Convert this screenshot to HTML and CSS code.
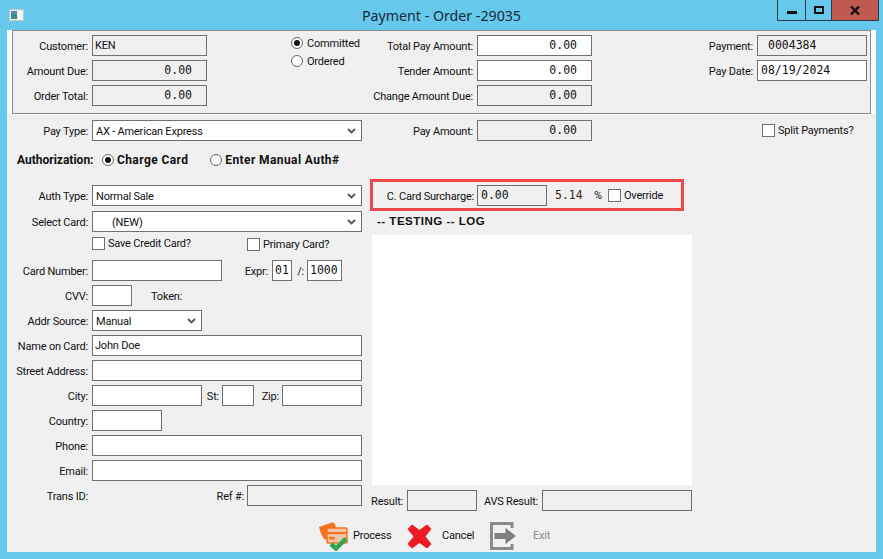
FILE: index.html
```html
<!DOCTYPE html>
<html lang="en">
<head>
<meta charset="utf-8">
<title>Payment - Order -29035</title>
<link rel="stylesheet" href="styles.css">
</head>
<body>
<div class="window">
  <header class="titlebar">
    <svg class="app-icon" width="15" height="12" viewBox="0 0 15 12"><rect x="0.5" y="0.5" width="14" height="11" fill="#e8eef0" stroke="#c4ccd0"/><rect x="2" y="2" width="6" height="8" fill="#3c8f86"/><rect x="2" y="2" width="6" height="3" fill="#5a8fb0"/><rect x="9" y="2" width="4" height="8" fill="#f8fafa"/></svg>
    <h1 class="title">Payment - Order -29035</h1>
    <div class="controls">
      <div class="ctl ctl-min"><span class="glyph-min"></span></div>
      <div class="ctl ctl-max"><span class="glyph-max"></span></div>
      <div class="ctl ctl-close"><svg width="10" height="9" viewBox="0 0 10 9"><path d="M1 0.5L9 8.5M9 0.5L1 8.5" stroke="#111" stroke-width="2.4" fill="none"/></svg></div>
    </div>
  </header>
  <main class="client">
    <div class="band">
    <section class="group">
      <div class="col col-a">
        <div class="row"><label class="lbl w77">Customer:</label><div class="fld ro w115">KEN</div></div>
        <div class="row"><label class="lbl w77">Amount Due:</label><div class="fld ro w115 num">0.00</div></div>
        <div class="row"><label class="lbl w77">Order Total:</label><div class="fld ro w115 num">0.00</div></div>
      </div>
      <div class="col col-b">
        <div class="opt"><span class="radio on"></span>Committed</div>
        <div class="opt"><span class="radio"></span>Ordered</div>
      </div>
      <div class="col col-c">
        <div class="row"><label class="lbl w104">Total Pay Amount:</label><div class="fld w115 num">0.00</div></div>
        <div class="row"><label class="lbl w104">Tender Amount:</label><div class="fld w115 num">0.00</div></div>
        <div class="row"><label class="lbl w104">Change Amount Due:</label><div class="fld ro w115 num">0.00</div></div>
      </div>
      <div class="col col-d">
        <div class="row"><label class="lbl w52">Payment:</label><div class="fld ro w110 mono pay-no">0004384</div></div>
        <div class="row"><label class="lbl w52">Pay Date:</label><div class="fld w110 mono">08/19/2024</div></div>
      </div>
    </section>
    </div>

    <section class="pay-row">
      <label class="lbl w80">Pay Type:</label>
      <div class="fld sel w270"><span>AX - American Express</span><svg class="chev" width="9" height="6" viewBox="0 0 9 6"><path d="M1 1L4.500 4.500L8 1" fill="none" stroke="#555" stroke-width="1.800"/></svg></div>
      <label class="lbl w112">Pay Amount:</label>
      <div class="fld ro w115 num">0.00</div>
      <div class="opt split"><span class="check"></span>Split Payments?</div>
    </section>

    <section class="auth-row">
      <strong class="auth-lbl">Authorization:</strong>
      <span class="radio on"></span><strong class="auth-opt">Charge Card</strong>
      <span class="radio r2"></span><strong class="auth-opt">Enter Manual Auth#</strong>
    </section>

    <section class="columns">
      <div class="left">
        <div class="row"><label class="lbl w80">Auth Type:</label><div class="fld sel w270"><span>Normal Sale</span><svg class="chev" width="9" height="6" viewBox="0 0 9 6"><path d="M1 1L4.500 4.500L8 1" fill="none" stroke="#555" stroke-width="1.800"/></svg></div></div>
        <div class="row row-card"><label class="lbl w80">Select Card:</label><div class="fld sel w270"><span class="indent">(NEW)</span><svg class="chev" width="9" height="6" viewBox="0 0 9 6"><path d="M1 1L4.500 4.500L8 1" fill="none" stroke="#555" stroke-width="1.800"/></svg></div></div>
        <div class="checks">
          <div class="opt save"><span class="check"></span>Save Credit Card?</div>
          <div class="opt primary"><span class="check"></span>Primary Card?</div>
        </div>
        <div class="row"><label class="lbl w80">Card Number:</label><div class="fld w130"></div><label class="lbl expr">Expr:</label><div class="fld w20 mono">01</div><label class="lbl slash">/:</label><div class="fld w35 mono">1000</div></div>
        <div class="row"><label class="lbl w80">CVV:</label><div class="fld w40"></div><label class="lbl token">Token:</label></div>
        <div class="row"><label class="lbl w80">Addr Source:</label><div class="fld sel w110"><span>Manual</span><svg class="chev" width="9" height="6" viewBox="0 0 9 6"><path d="M1 1L4.500 4.500L8 1" fill="none" stroke="#555" stroke-width="1.800"/></svg></div></div>
        <div class="row"><label class="lbl w80">Name on Card:</label><div class="fld w270">John Doe</div></div>
        <div class="row"><label class="lbl w80">Street Address:</label><div class="fld w270"></div></div>
        <div class="row"><label class="lbl w80">City:</label><div class="fld w110"></div><label class="lbl st">St:</label><div class="fld w32"></div><label class="lbl zip">Zip:</label><div class="fld f80"></div></div>
        <div class="row"><label class="lbl w80">Country:</label><div class="fld w70"></div></div>
        <div class="row"><label class="lbl w80">Phone:</label><div class="fld w270"></div></div>
        <div class="row"><label class="lbl w80">Email:</label><div class="fld w270"></div></div>
        <div class="row"><label class="lbl w80">Trans ID:</label><label class="lbl ref">Ref #:</label><div class="fld ro w115"></div></div>
      </div>
      <div class="right">
        <div class="surcharge">
          <label class="lbl sur-lbl">C. Card Surcharge:</label>
          <div class="fld ro w70 mono">0.00</div>
          <span class="mono rate">5.14</span>
          <span class="pct">%</span>
          <span class="check"></span>
          <span class="over">Override</span>
        </div>
        <div class="log-title">-- TESTING -- LOG</div>
        <div class="log"></div>
        <div class="row result"><label class="lbl res-lbl">Result:</label><div class="fld ro w70"></div><label class="lbl avs-lbl">AVS Result:</label><div class="fld ro w150"></div></div>
      </div>
    </section>

    <footer class="actions">
      <div class="act act-process">
        <svg width="30" height="30" viewBox="0 0 30 30"><path d="M0 6L13 1.500Q15 1 16 3L17 7L9 7L9 19L5 18Q1 12 0 6Z" fill="#f7701e"/><rect x="8" y="7" width="20" height="15" rx="1" fill="#f5c6a6" stroke="#f7701e" stroke-width="1.500"/><rect x="8" y="11" width="20" height="2" fill="#f7701e"/><rect x="10" y="16" width="6" height="2.500" fill="#f7701e"/><path d="M12 23L17 27.500L27 17.500" fill="none" stroke="#2fa84f" stroke-width="4.500"/></svg>
        <span>Process</span>
      </div>
      <div class="act act-cancel">
        <svg width="25" height="25" viewBox="0 0 25 25"><path d="M5 0.500L12.500 6L20 0.500L24.500 5L18.500 12.500L24.500 20L20 24.500L12.500 19L5 24.500L0.500 20L6.500 12.500L0.500 5Z" fill="#ed1c24"/></svg>
        <span>Cancel</span>
      </div>
      <div class="act act-exit">
        <svg width="27" height="28" viewBox="0 0 27 28"><path d="M22 6V1.500H1.500V26.500H22V22" fill="none" stroke="#8a8a8a" stroke-width="3"/><path d="M4 10.500H15V5L26.500 14L15 23V17.500H4Z" fill="#7f7f7f" stroke="#fff" stroke-width="0.800"/></svg>
        <span>Exit</span>
      </div>
    </footer>
  </main>
</div>
</body>
</html>
```
FILE: styles.css
```css
* { box-sizing: border-box; }
html, body { margin: 0; padding: 0; }
body { width: 883px; height: 559px; overflow: hidden; background: #66c9ec; font-family: Roboto, "Liberation Sans", sans-serif; font-size: 11px; letter-spacing: -0.2px; color: #111; }
.window { width: 883px; height: 559px; display: flex; flex-direction: column; }
.titlebar { height: 30px; flex: none; position: relative; display: flex; justify-content: center; align-items: center; }
.app-icon { position: absolute; left: 9px; top: 9px; }
.title { margin: 0; font-size: 14.200px; font-weight: 400; letter-spacing: 0; color: #14293a; font-family: "Noto Sans", sans-serif; }
.controls { position: absolute; left: 777px; top: 0; display: flex; height: 21px; border: 1px solid #2b3d4a; border-top: 0; }
.ctl { display: flex; align-items: center; justify-content: center; height: 20px; }
.ctl-min { width: 28px; border-right: 1px solid #2b3d4a; }
.ctl-max { width: 26px; border-right: 1px solid #2b3d4a; }
.ctl-close { width: 46px; background: #c05a50; }
.glyph-min { width: 10px; height: 3px; background: #111; margin-top: 5px; }
.glyph-max { width: 10px; height: 8px; border: 2px solid #111; }
.client { flex: none; height: 522px; margin: 0 7px; background: #f0f0f0; display: flex; flex-direction: column; }

.band { background: #fafafa; padding: 0 5px; flex: none; }
.group { height: 84px; background: #f0f0f0; border: 1px solid #8a8a8a; padding-top: 4px; display: flex; box-shadow: 1px 1px 0 #fff; }
.col { display: flex; flex-direction: column; gap: 4px; flex: none; }
.col-a { width: 278px; }
.col-b { width: 79px; gap: 0; margin-top: -1px; }
.col-c { width: 332px; }

.row { display: flex; align-items: center; height: 21px; }
.lbl { text-align: right; white-space: nowrap; flex: none; padding-top: 2px; }
.fld { height: 21px; flex: none; border: 1px solid #6f6f6f; background: #fff; padding: 0 2px; line-height: 19px; white-space: nowrap; }
.ro { background: #f0f0f0; }
.num { font-family: "DejaVu Sans Mono", monospace; font-size: 11.500px; letter-spacing: 0; line-height: 19px; text-align: right; padding-right: 14px; }
.mono { font-family: "DejaVu Sans Mono", monospace; font-size: 11.500px; letter-spacing: 0; line-height: 19px; }
.w77 { width: 75px; margin-right: 4px; }
.w80 { width: 76px; margin-right: 4px; }
.w104 { width: 103px; margin-right: 4px; }
.w52 { width: 51px; margin-right: 4px; }
.w112 { width: 111px; margin-right: 4px; }
.w115 { width: 115px; }
.w110 { width: 110px; }
.w270 { width: 270px; }
.w130 { width: 130px; }
.w20 { width: 20px; }
.w35 { width: 35px; }
.w40 { width: 40px; }
.w32 { width: 32px; }
.f80 { width: 80px; }
.w70 { width: 70px; }
.w150 { width: 150px; }
.col-d .mono { padding-left: 3px; }
.col-d .pay-no { padding-left: 10px; }

.opt { display: flex; align-items: center; height: 18px; white-space: nowrap; }
.radio { width: 12px; height: 12px; flex: none; border-radius: 50%; border: 1px solid #666; background: #fff; margin-right: 4px; display: inline-flex; align-items: center; justify-content: center; }
.radio.on::after { content: ""; width: 6px; height: 6px; border-radius: 50%; background: #111; }
.check { width: 13px; height: 13px; flex: none; border: 1px solid #6f6f6f; background: #fff; display: inline-block; margin-right: 3px; }

.pay-row { display: flex; align-items: center; height: 21px; margin: 6px 0 0 5px; }
.split { margin-left: 170px; }

.auth-row { display: flex; align-items: center; height: 18px; margin: 10px 0 0 10px; }
.auth-lbl { width: 85px; font-size: 12px; letter-spacing: 0; }
.auth-opt { font-size: 12px; letter-spacing: 0.4px; }
.auth-row .radio { margin-right: 3px; }
.auth-row .r2 { margin-left: 22px; }

.columns { display: flex; margin: 16px 0 0 5px; }
.left { width: 360px; display: flex; flex-direction: column; gap: 4px; }
.row-card { margin-top: 1px; }
.right { width: 322px; margin-top: -6px; }

.sel { display: flex; align-items: center; justify-content: space-between; padding-right: 5px; padding-left: 3px; }
.sel span { padding-top: 1px; }
.sel .indent { padding-left: 16px; }
.chev { flex: none; }

.checks { height: 20px; display: flex; align-items: center; padding-left: 80px; }
.save { width: 155px; margin-top: -5px; }
.primary { margin-top: -3px; }

.expr { width: 46px; margin-right: 4px; }
.slash { margin: 0 3px 0 4px; width: 8px; }
.token { margin-left: 19px; }
.st { margin-left: 4px; margin-right: 3px; width: 13px; }
.zip { margin-left: 7px; margin-right: 3px; width: 18px; }
.ref { margin-right: 3px; width: 152px; }

.surcharge { width: 314px; height: 32px; margin-left: -2px; border: 3px solid #ec4a4a; display: flex; align-items: center; }
.sur-lbl { width: 101px; margin-right: 3px; }
.surcharge .fld { padding-left: 3px; }
.rate { margin-left: 8px; width: 27px; flex: none; color: #3a1f1f; }
.pct { margin-left: 12px; margin-right: 5px; width: 9px; flex: none; }

.log-title { font-family: "Liberation Sans", sans-serif; font-size: 11.500px; font-weight: 700; letter-spacing: 0.5px; height: 24px; padding: 4px 0 0 5px; }
.log { width: 320px; height: 250px; background: #fff; }
.result { margin-top: 5px; margin-left: -1px; }
.res-lbl { width: 32px; margin-right: 4px; }
.avs-lbl { width: 57px; margin: 0 4px; }

.actions { display: flex; align-items: center; height: 34px; margin-top: 7px; padding-left: 312px; }
.act { display: flex; align-items: center; flex: none; }
.act svg { margin-top: 2px; }
.act-process { width: 88px; }
.act-process span { margin-left: 4px; }
.act-cancel { width: 83px; }
.act-cancel span { margin-left: 10px; }
.act-exit span { margin-left: 16px; color: #8c8c8c; }
```
